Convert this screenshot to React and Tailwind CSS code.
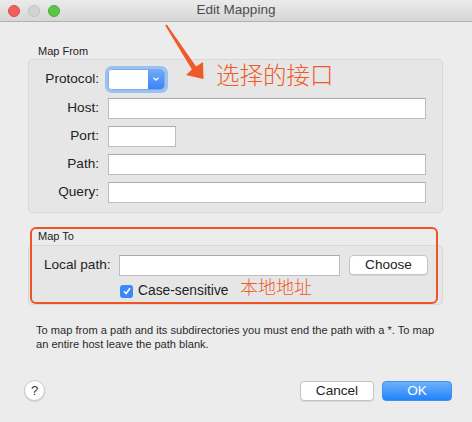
import React from 'react';

const field = 'h-[21px] bg-white border border-[#bdbdbd] border-t-[#a9a9a9]';

function Row({ label, children, className = 'h-[28px]' }) {
  return (
    <div className={`flex items-center ${className}`}>
      <span className="w-[71px] pr-[1px] text-right text-[13.6px] text-[#222]">{label}</span>
      <div className="flex-1 pl-[8px] pr-[16px] flex items-center">{children}</div>
    </div>
  );
}

function Lights() {
  return (
    <div className="absolute left-[8px] top-[5px] flex gap-[8px]">
      <span className="w-[12px] h-[12px] rounded-full bg-[#f0605a] border border-[#dc4c45]" />
      <span className="w-[12px] h-[12px] rounded-full bg-[#d3d3d3] border border-[#c2c2c2]" />
      <span className="w-[12px] h-[12px] rounded-full bg-[#5bc645] border border-[#49ad36]" />
    </div>
  );
}

export default function App() {
  return (
    <div className="relative w-[472px] h-[422px] overflow-hidden bg-[#ececec] font-['Liberation_Sans','Noto_Sans_CJK_SC',sans-serif] text-[#222]">
      {/* title bar */}
      <div className="relative h-[22px] bg-gradient-to-b from-[#ebebeb] to-[#d6d6d6] border-b border-[#b1b1b1] flex items-center justify-center">
        <Lights />
        <span className="text-[13.5px] text-[#4d4d4d]">Edit Mapping</span>
      </div>

      <div className="pl-[28px] pr-[29px] pt-[23px]">
        {/* Map From */}
        <div className="ml-[10px] text-[11px] leading-[13px] mb-[1px]">Map From</div>
        <div className="h-[154px] rounded-[4px] border border-[#d9d9d9] bg-[#e6e6e6] pt-[4px]">
          <Row label="Protocol:" className="h-[30px]">
            <div className="flex h-[21px] w-[57px] rounded-[4px] overflow-hidden ring-[3px] ring-[#9cc0f0] border border-[#7fa9e8]">
              <div className="flex-1 bg-white" />
              <div className="w-[16px] bg-gradient-to-b from-[#6eaaf9] to-[#3b83f6] flex items-center justify-center">
                <svg width="8" height="6" viewBox="0 0 8 6">
                  <path d="M1.5 1.8 L4 4.2 L6.5 1.8" fill="none" stroke="white" strokeWidth="1.3" />
                </svg>
              </div>
            </div>
          </Row>
          <Row label="Host:">
            <div className={`${field} w-full`} />
          </Row>
          <Row label="Port:">
            <div className={`${field} w-[68px]`} />
          </Row>
          <Row label="Path:">
            <div className={`${field} w-full`} />
          </Row>
          <Row label="Query:">
            <div className={`${field} w-full`} />
          </Row>
        </div>

        {/* Map To */}
        <div className="ml-[10px] mt-[17px] text-[11px] leading-[13px] mb-[2px]">Map To</div>
        <div className="h-[60px] rounded-[4px] border border-[#d9d9d9] bg-[#e6e6e6] pt-[9px]">
          <div className="flex items-center h-[20px]">
            <span className="pl-[15px] w-[83px] text-[13.6px] whitespace-nowrap">Local path:</span>
            <div className="ml-[7px] w-[221px] h-[21px] bg-white border border-[#bdbdbd] border-t-[#a9a9a9]" />
            <button className="ml-[9px] w-[79px] h-[20px] rounded-[4px] bg-white border border-[#c4c4c4] shadow-[0_1px_0_rgba(0,0,0,0.08)] text-[13.6px] leading-[18px]">
              Choose
            </button>
          </div>
          <div className="flex items-center mt-[9px] ml-[91px] h-[14px]">
            <span className="w-[13px] h-[13px] rounded-[3px] bg-[#3d88f7] flex items-center justify-center">
              <svg width="10" height="10" viewBox="0 0 10 10">
                <path d="M2 5.2 L4.2 7.5 L8 2.3" fill="none" stroke="white" strokeWidth="1.6" />
              </svg>
            </span>
            <span className="ml-[5px] text-[13.8px]">Case-sensitive</span>
          </div>
        </div>

        <p className="mt-[18px] ml-[8px] text-[11.1px] leading-[14px] text-[#2a2a2a]">
          To map from a path and its subdirectories you must end the path with a *. To map
          <br />
          an entire host leave the path blank.
        </p>
      </div>

      {/* footer buttons */}
      <div className="flex items-center pl-[24px] pr-[20px] mt-[29px]">
        <button className="w-[21px] h-[21px] rounded-full bg-white border border-[#c9c9c9] shadow-[0_1px_1px_rgba(0,0,0,0.12)] text-[13px] leading-[19px] text-[#333]">
          ?
        </button>
        <div className="flex-1" />
        <button className="w-[74px] h-[20px] rounded-[4px] bg-white border border-[#c4c4c4] shadow-[0_1px_0_rgba(0,0,0,0.08)] text-[13.6px] leading-[18px]">
          Cancel
        </button>
        <button className="ml-[8px] w-[70px] h-[20px] rounded-[4px] bg-gradient-to-b from-[#6bb1fb] to-[#1f82fb] border border-[#3d8ef5] text-[13.6px] leading-[18px] text-white">
          OK
        </button>
      </div>

      {/* annotations */}
      <svg className="absolute left-[155px] top-[20px]" width="60" height="65" viewBox="0 0 60 65">
        <polygon
          points="10.2,5.6 11.8,4.4 41.1,46.6 48,42 48.5,59 31,55 36.9,49.4"
          fill="#ef5a28"
        />
      </svg>
      <span className="absolute left-[216px] top-[60px] text-[23.5px] leading-[28px] text-[#ef5a28] font-['Noto_Sans_CJK_SC',sans-serif] font-light">
        选择的接口
      </span>
      <div className="absolute left-[30px] top-[227px] w-[408px] h-[77px] rounded-[6px] border-2 border-[#ee5526]" />
      <span className="absolute left-[240px] top-[275px] text-[18px] leading-[22px] text-[#ef5a28] font-['Noto_Sans_CJK_SC',sans-serif] font-light">
        本地地址
      </span>
    </div>
  );
}
